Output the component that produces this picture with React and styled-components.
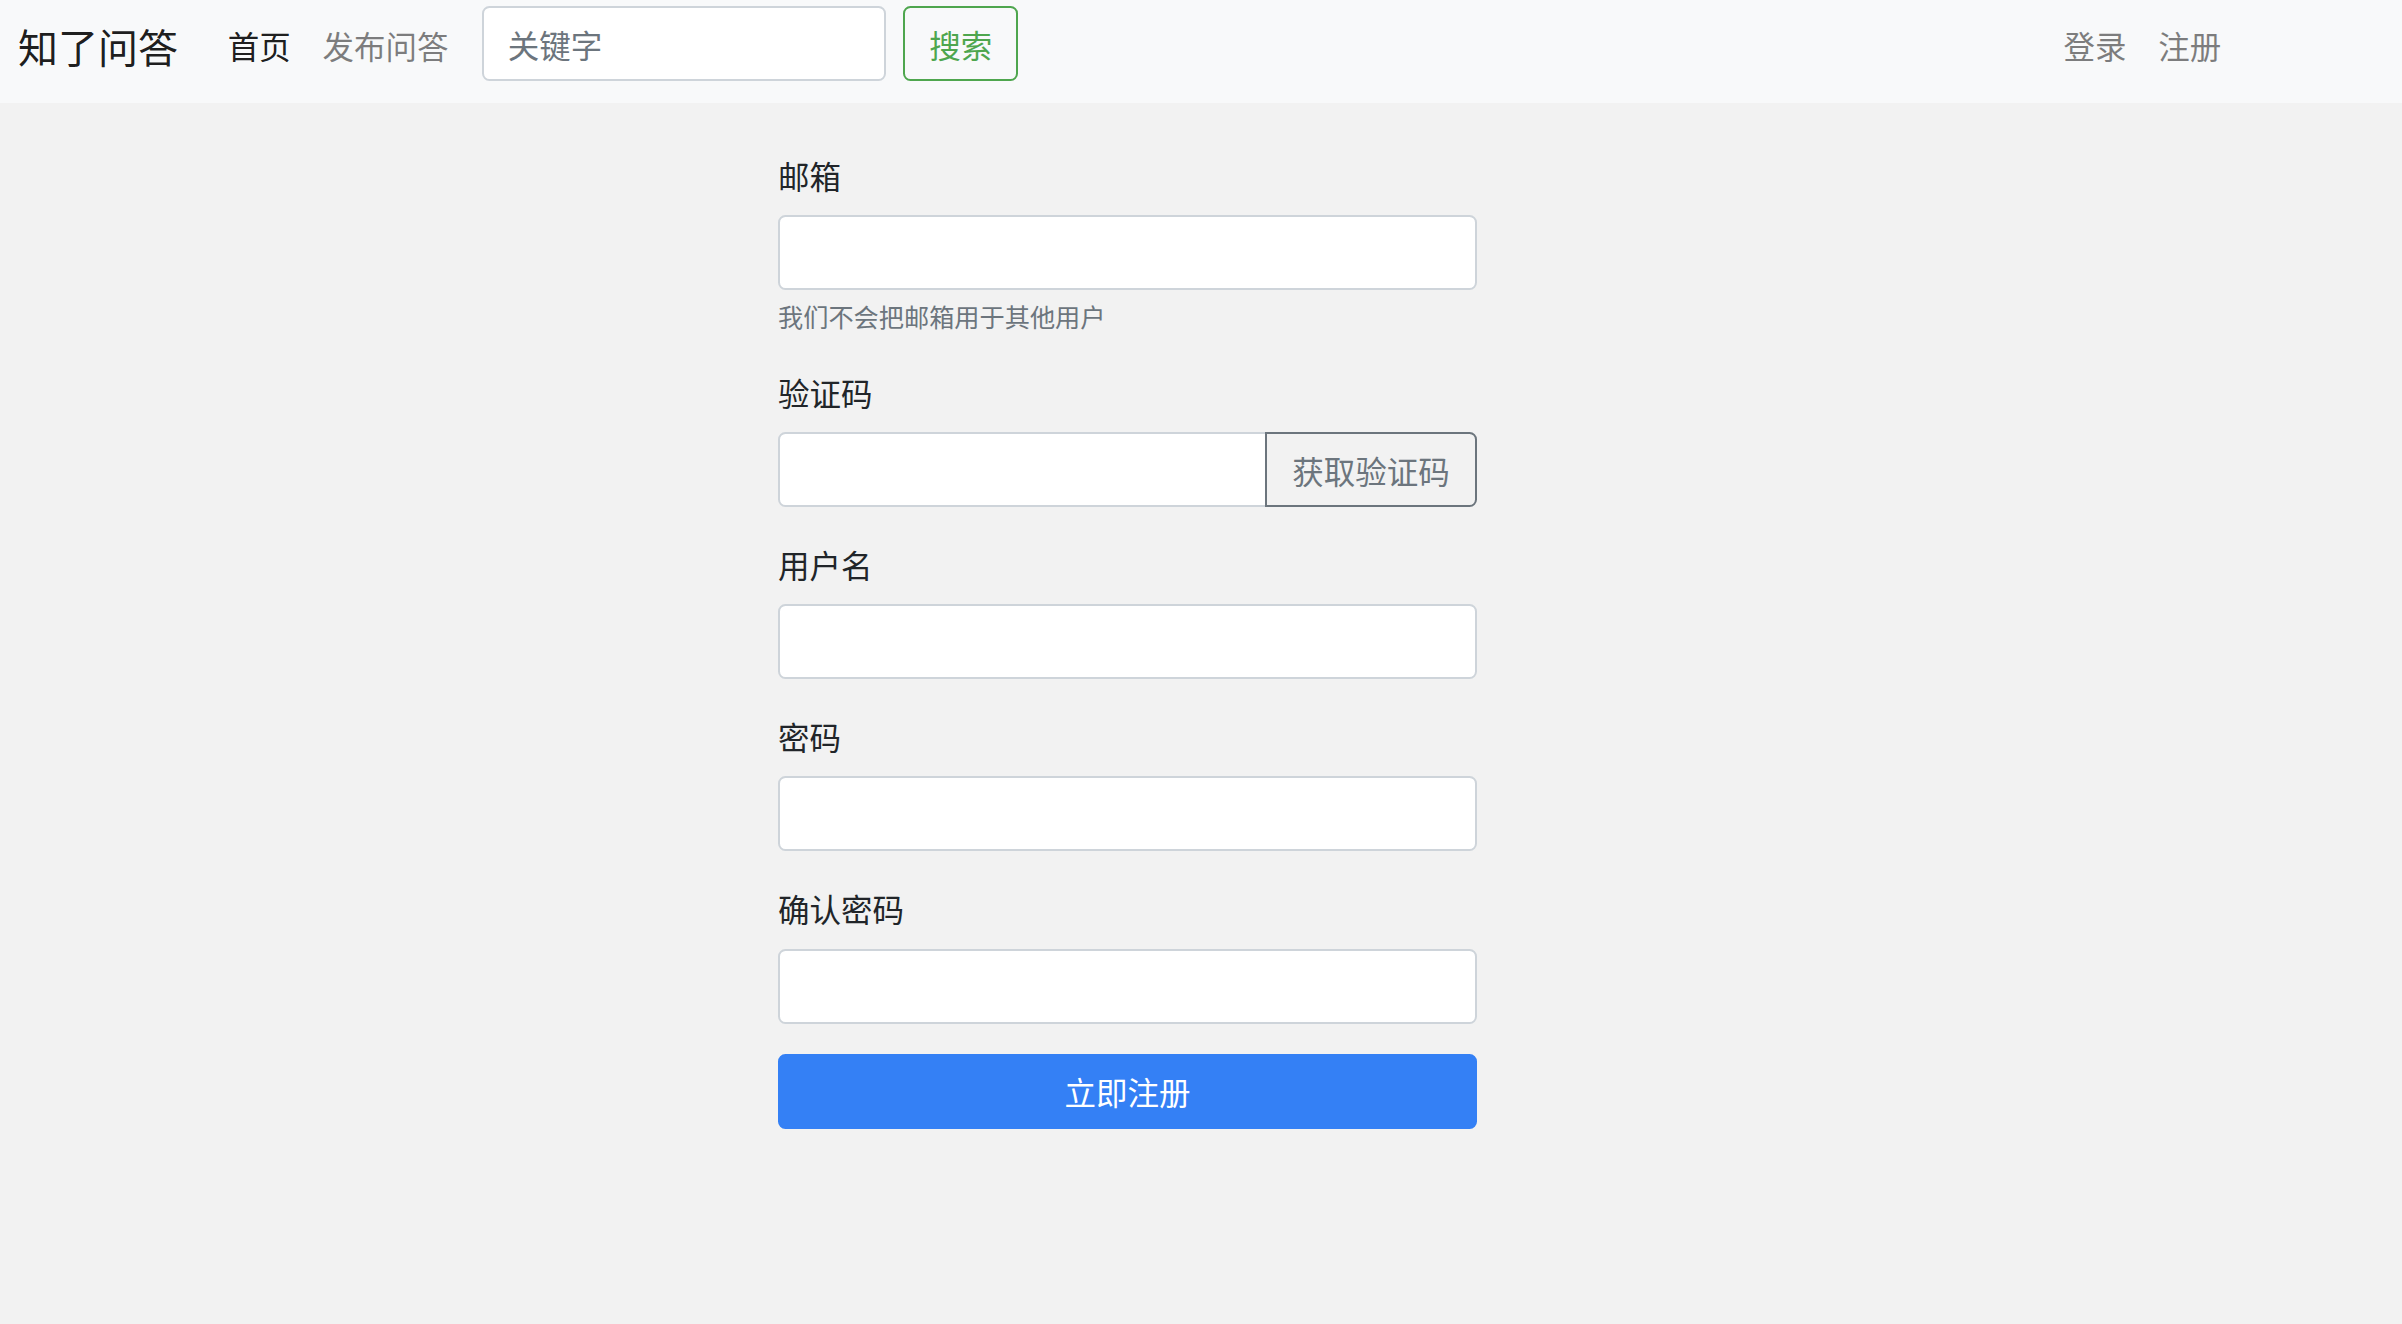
import React from 'react';
import styled, { createGlobalStyle } from 'styled-components';

const GlobalStyle = createGlobalStyle`
  html, body {
    margin: 0;
    padding: 0;
    background: #f2f2f2;
    min-height: 100vh;
  }
  body {
    font-family: "Noto Sans CJK SC", "Noto Sans", sans-serif;
    color: #212529;
  }
  * {
    box-sizing: border-box;
  }
`;

const Navbar = styled.nav`
  height: 103px;
  padding: 6px 0 22px 18px;
  background: #f8f9fa;
  display: flex;
  align-items: center;
`;

const Brand = styled.a`
  font-size: 40px;
  line-height: 1.5;
  padding-top: 4px;
  color: rgba(0, 0, 0, 0.9);
  margin-right: 34px;
  text-decoration: none;
`;

const NavList = styled.div`
  display: flex;
  align-items: center;
  padding-top: 4px;
  margin-left: ${(p) => (p.$right ? 'auto' : '0')};
  margin-right: ${(p) => (p.$right ? '165px' : '0')};
`;

const NavLink = styled.a`
  font-size: 31.5px;
  line-height: 1.5;
  padding: 0 15.8px;
  text-decoration: none;
  color: ${(p) => (p.$active ? 'rgba(0, 0, 0, 0.9)' : 'rgba(0, 0, 0, 0.5)')};
`;

const SearchForm = styled.form`
  display: flex;
  align-items: center;
  gap: 17px;
  margin-left: 18px;
`;

const SearchInput = styled.input`
  width: 404px;
  height: 75px;
  padding: 0 23.6px;
  font-family: inherit;
  font-size: 31.5px;
  border: 2px solid #ced4da;
  border-radius: 7.4px;
  background: #fff;
  color: #495057;
  outline: none;

  &::placeholder {
    color: #6c757d;
  }
`;

const SearchButton = styled.button`
  width: 115px;
  height: 75px;
  font-family: inherit;
  font-size: 31.5px;
  color: #4ea64e;
  background: transparent;
  border: 2px solid #4ea64e;
  border-radius: 7.4px;
  padding: 0;
`;

const Main = styled.main`
  width: 699px;
  margin: 48.5px 0 0 778px;
`;

const Group = styled.div`
  margin-bottom: ${(p) => p.$gap || '34px'};
`;

const Label = styled.label`
  display: block;
  font-size: 31.5px;
  line-height: 1.5;
  margin-bottom: 15.8px;
  color: #212529;
`;

const Input = styled.input`
  display: block;
  width: 100%;
  height: 75px;
  padding: 0 23.6px;
  font-family: inherit;
  font-size: 31.5px;
  border: 2px solid #ced4da;
  border-radius: ${(p) => (p.$attached ? '7.4px 0 0 7.4px' : '7.4px')};
  background: #fff;
  outline: none;
  flex: 1;
  min-width: 0;
`;

const HelpText = styled.small`
  display: block;
  margin-top: 8px;
  font-size: 25.2px;
  line-height: 1.5;
  color: #6c757d;
`;

const InputGroup = styled.div`
  display: flex;
  width: 100%;
`;

const AddonButton = styled.button`
  width: 212px;
  height: 75px;
  margin-left: -2px;
  font-family: inherit;
  font-size: 31.5px;
  color: #6c757d;
  background: transparent;
  border: 2px solid #6c757d;
  border-radius: 0 7.4px 7.4px 0;
  padding: 0;
`;

const SubmitButton = styled.button`
  display: block;
  width: 100%;
  height: 75px;
  font-family: inherit;
  font-size: 31.5px;
  color: #fff;
  background: #3480f5;
  border: 2px solid #3480f5;
  border-radius: 7.4px;
`;

const fields = [
  { label: '用户名', type: 'text' },
  { label: '密码', type: 'password' },
  { label: '确认密码', type: 'password', gap: '30px' },
];

export default function App() {
  return (
    <>
      <GlobalStyle />
      <Navbar>
        <Brand href="#">知了问答</Brand>
        <NavList>
          <NavLink href="#" $active>首页</NavLink>
          <NavLink href="#">发布问答</NavLink>
        </NavList>
        <SearchForm onSubmit={(e) => e.preventDefault()}>
          <SearchInput placeholder="关键字" />
          <SearchButton type="submit">搜索</SearchButton>
        </SearchForm>
        <NavList $right>
          <NavLink href="#">登录</NavLink>
          <NavLink href="#">注册</NavLink>
        </NavList>
      </Navbar>
      <Main>
        <form onSubmit={(e) => e.preventDefault()}>
          <Group $gap="34px">
            <Label>邮箱</Label>
            <Input type="email" />
            <HelpText>我们不会把邮箱用于其他用户</HelpText>
          </Group>
          <Group>
            <Label>验证码</Label>
            <InputGroup>
              <Input type="text" $attached />
              <AddonButton type="button">获取验证码</AddonButton>
            </InputGroup>
          </Group>
          {fields.map((f) => (
            <Group key={f.label} $gap={f.gap}>
              <Label>{f.label}</Label>
              <Input type={f.type} />
            </Group>
          ))}
          <SubmitButton type="submit">立即注册</SubmitButton>
        </form>
      </Main>
    </>
  );
}
